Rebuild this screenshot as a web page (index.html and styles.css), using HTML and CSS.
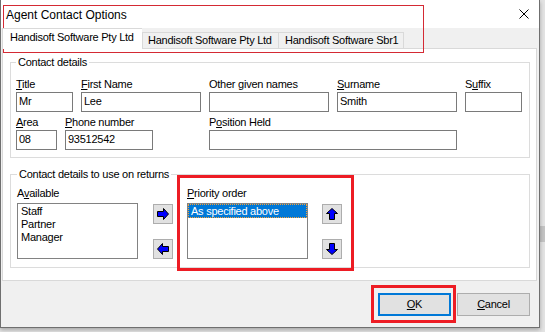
FILE: index.html
```html
<!DOCTYPE html>
<html lang="en">
<head>
<meta charset="utf-8">
<title>Agent Contact Options</title>
<link rel="stylesheet" href="styles.css">
</head>
<body>
<div class="screen">
  <div class="window">
    <div class="titlebar">
      <span class="title">Agent Contact Options</span>
      <svg class="close" width="10" height="10" viewBox="0 0 10 10"><path d="M0.5 0.5 L9.5 9.5 M9.5 0.5 L0.5 9.5" stroke="#000" stroke-width="1" fill="none"/></svg>
    </div>
    <div class="tabs">
      <div class="tab active t1">Handisoft Software Pty Ltd</div>
      <div class="tab t2">Handisoft Software Pty Ltd</div>
      <div class="tab t3">Handisoft Software Sbr1</div>
    </div>
    <div class="panel">
      <fieldset class="group details">
        <legend>Contact details</legend>
        <div class="row">
          <div class="field w-title"><span class="lbl"><u>T</u>itle</span><div class="input">Mr</div></div>
          <div class="field w-name"><span class="lbl"><u>F</u>irst Name</span><div class="input">Lee</div></div>
          <div class="field w-name"><span class="lbl">Other <u>g</u>iven names</span><div class="input"></div></div>
          <div class="field w-name"><span class="lbl"><u>S</u>urname</span><div class="input">Smith</div></div>
          <div class="field w-title"><span class="lbl">S<u>u</u>ffix</span><div class="input"></div></div>
        </div>
        <div class="row">
          <div class="field w-area"><span class="lbl"><u>A</u>rea</span><div class="input">08</div></div>
          <div class="field w-phone"><span class="lbl"><u>P</u>hone number</span><div class="input">93512542</div></div>
          <div class="field w-pos"><span class="lbl">P<u>o</u>sition Held</span><div class="input"></div></div>
        </div>
      </fieldset>
      <fieldset class="group returns">
        <legend>Contact details to use on returns</legend>
        <div class="picker">
          <div class="listcol">
            <span class="lbl">A<u>v</u>ailable</span>
            <div class="listbox">
              <div class="item">Staff</div>
              <div class="item">Partner</div>
              <div class="item">Manager</div>
            </div>
          </div>
          <div class="btncol">
            <button class="arrow"><svg width="18" height="18" viewBox="0 0 18 18"><polygon points="3.5,6.5 9.5,6.5 9.5,3.5 14.5,9 9.5,14.5 9.5,11.5 3.5,11.5" fill="#0000ff" stroke="#000" stroke-width="1"/></svg></button>
            <button class="arrow"><svg width="18" height="18" viewBox="0 0 18 18"><polygon points="14.5,6.5 8.5,6.5 8.5,3.5 3.5,9 8.5,14.5 8.5,11.5 14.5,11.5" fill="#0000ff" stroke="#000" stroke-width="1"/></svg></button>
          </div>
          <div class="listcol prio">
            <span class="lbl"><u>P</u>riority order</span>
            <div class="listbox">
              <div class="item selected">As specified above</div>
            </div>
          </div>
          <div class="btncol">
            <button class="arrow"><svg width="18" height="18" viewBox="0 0 18 18"><polygon points="6.5,14.5 6.5,8.5 3.5,8.5 9,3.5 14.5,8.5 11.5,8.5 11.5,14.5" fill="#0000ff" stroke="#000" stroke-width="1"/></svg></button>
            <button class="arrow"><svg width="18" height="18" viewBox="0 0 18 18"><polygon points="6.5,3.5 6.5,9.5 3.5,9.5 9,14.5 14.5,9.5 11.5,9.5 11.5,3.5" fill="#0000ff" stroke="#000" stroke-width="1"/></svg></button>
          </div>
        </div>
      </fieldset>
    </div>
    <div class="footer">
      <button class="btn ok"><u>O</u>K</button>
      <button class="btn"><u>C</u>ancel</button>
    </div>
    <div class="annot thin"></div>
    <div class="annot mark prio-mark"></div>
    <div class="annot mark ok-mark"></div>
  </div>
  <div class="scrollbar"><div class="thumb"></div></div>
</div>
</body>
</html>
```

FILE: styles.css
```css
* { box-sizing: border-box; }
html, body { margin: 0; padding: 0; }
body {
  width: 545px;
  height: 332px;
  overflow: hidden;
  background: #e6e6e6;
  font-family: "Liberation Sans", Arial, sans-serif;
  font-size: 11px;
  letter-spacing: -0.25px;
  color: #000;
}
.screen { display: flex; align-items: flex-start; }

.window {
  position: relative;
  width: 540px;
  height: 328px;
  border: 1px solid #6f6f6f;
  border-top: none;
  background: #f0f0f0;
  box-shadow: 0 2px 4px rgba(0,0,0,0.28);
  display: flex;
  flex-direction: column;
}

.titlebar {
  height: 28px;
  flex: none;
  background: #fff;
  display: flex;
  align-items: center;
  justify-content: space-between;
  padding: 0 10px 0 5px;
}
.title {
  font-size: 12px;
  letter-spacing: 0;
  line-height: 14px;
  padding-top: 1px;
}
.close { display: block; }

.tabs {
  height: 20px;
  flex: none;
  display: flex;
  align-items: flex-end;
  padding-left: 1px;
}
.tab {
  height: 16px;
  border: 1px solid #d9d9d9;
  border-bottom: none;
  background: #f0f0f0;
  line-height: 15px;
  padding-left: 5px;
  white-space: nowrap;
  overflow: hidden;
}
.tab.t1 { width: 140px; }
.tab.t2 { width: 137px; }
.tab.t3 { width: 125px; border-left: none; padding-left: 6px; }
.tab.active {
  height: 21px;
  margin-bottom: -1px;
  background: #fff;
  position: relative;
  z-index: 1;
  padding-top: 1px;
  padding-left: 7px;
  border-right: none;
}

.panel {
  height: 233px;
  flex: none;
  margin: 0 2px 0 1px;
  background: #fff;
  border: 1px solid #d9d9d9;
  padding: 0 0 0 7px;
}

.group {
  margin: 7px 0 0 0;
  width: 520px;
  border: 1px solid #dcdcdc;
  min-width: 0;
}
.group legend {
  padding: 0 2px;
  line-height: 13px;
}
.details { padding: 9px 0 7px 5px; }
.returns { margin-top: 10px; padding: 6px 0 8px 6px; }

.row { display: flex; gap: 8px; }
.row + .row { margin-top: 4px; }
.field { display: flex; flex-direction: column; }
.lbl { line-height: 13px; white-space: nowrap; }
.field .lbl { margin-bottom: 1px; }
.w-title { width: 57px; }
.w-name { width: 120px; }
.w-area { width: 41px; }
.w-phone { width: 88px; }
.w-pos { width: 248px; margin-left: 48px; }

.input {
  height: 20px;
  border: 1px solid #7a7a7a;
  padding: 0 2px;
  line-height: 16px;
  white-space: nowrap;
  overflow: hidden;
}

.picker { display: flex; }
.listcol { display: flex; flex-direction: column; width: 121px; }
.listcol .lbl { margin-bottom: 3px; }
.listbox {
  height: 56px;
  border: 1px solid #828282;
  background: #fff;
}
.item {
  line-height: 14px;
  height: 13px;
  padding-left: 3px;
  white-space: nowrap;
}
.item.selected {
  height: 14px;
  background: #0078d7;
  color: #fff;
  outline: 1px dotted #f7a23a;
  outline-offset: -1px;
}
.btncol {
  display: flex;
  flex-direction: column;
  gap: 15px;
  padding-top: 17px;
  margin-left: 15px;
}
.prio { margin-left: 14px; }
.prio + .btncol { margin-left: 14px; }

.arrow {
  width: 20px;
  height: 20px;
  padding: 0;
  margin: 0;
  border: 1px solid #adadad;
  background: #e1e1e1;
  display: flex;
  align-items: center;
  justify-content: center;
}
.arrow svg { display: block; }

.footer {
  flex: 1;
  display: flex;
  justify-content: flex-end;
  align-items: flex-start;
  gap: 6px;
  padding: 12px 9px 0 0;
}
.btn {
  font: inherit;
  letter-spacing: inherit;
  color: #000;
  width: 73px;
  height: 23px;
  margin: 0;
  padding: 0;
  background: #e1e1e1;
  border: 1px solid #adadad;
  line-height: 15px;
}
.btn.ok { border: 2px solid #0078d7; }

.annot { position: absolute; pointer-events: none; }
.thin {
  left: 2px; top: 5px; width: 421px; height: 48px;
  border: 1px solid #d42a34;
}
.mark { border: 3px solid #ed1c24; }
.prio-mark { left: 176px; top: 175px; width: 177px; height: 96px; }
.ok-mark { left: 370px; top: 285px; width: 85px; height: 38px; }

.scrollbar {
  width: 5px;
  height: 332px;
  background: #e3e3e3;
  padding-top: 226px;
}
.thumb { height: 16px; background: #c4c4c4; }
```
